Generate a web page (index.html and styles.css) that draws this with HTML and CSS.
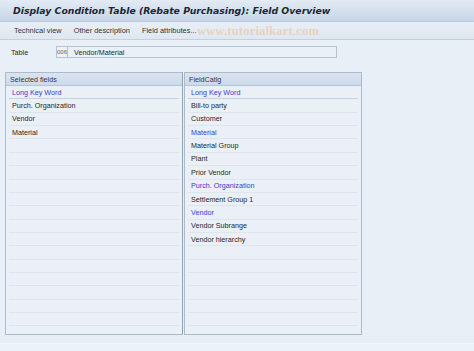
FILE: index.html
```html
<!DOCTYPE html>
<html>
<head>
<meta charset="utf-8">
<link rel="stylesheet" href="styles.css">
</head>
<body>
<div class="screen">
  <div class="titlebar">Display Condition Table (Rebate Purchasing): Field Overview</div>
  <div class="toolbar">
    <span class="tb-item">Technical view</span>
    <span class="tb-item">Other description</span>
    <span class="tb-item">Field attributes...</span>
    <span class="watermark">www.tutorialkart.com</span>
  </div>
  <div class="formrow">
    <span class="label">Table</span>
    <span class="code">006</span>
    <span class="input">Vendor/Material</span>
  </div>
  <div class="panels">
    <div class="panel left">
      <div class="phead">Selected fields</div>
      <div class="row key">Long Key Word</div>
      <div class="row">Purch. Organization</div>
      <div class="row">Vendor</div>
      <div class="row">Material</div>
      <div class="row"></div><div class="row"></div><div class="row"></div><div class="row"></div>
      <div class="row"></div><div class="row"></div><div class="row"></div><div class="row"></div>
      <div class="row"></div><div class="row"></div><div class="row"></div><div class="row"></div>
      <div class="row"></div><div class="row"></div>
    </div>
    <div class="panel right">
      <div class="phead">FieldCatlg</div>
      <div class="row key">Long Key Word</div>
      <div class="row">Bill-to party</div>
      <div class="row">Customer</div>
      <div class="row blue">Material</div>
      <div class="row">Material Group</div>
      <div class="row">Plant</div>
      <div class="row">Prior Vendor</div>
      <div class="row blue">Purch. Organization</div>
      <div class="row">Settlement Group 1</div>
      <div class="row blue">Vendor</div>
      <div class="row">Vendor Subrange</div>
      <div class="row">Vendor hierarchy</div>
      <div class="row"></div><div class="row"></div><div class="row"></div><div class="row"></div>
      <div class="row"></div><div class="row"></div>
    </div>
  </div>
  <div class="footer"></div>
</div>
</body>
</html>
```

FILE: styles.css
```css
html, body {
  margin: 0;
  padding: 0;
  background: #e9eff6;
}
.screen {
  width: 474px;
  height: 351px;
  overflow: hidden;
  font-family: "Liberation Sans", Arial, sans-serif;
  font-size: 7.2px;
  color: #262626;
  background: #e9eff6;
}
.titlebar {
  height: 22px;
  box-sizing: border-box;
  padding-left: 13px;
  display: flex;
  align-items: center;
  font-family: "DejaVu Sans", Verdana, sans-serif;
  font-weight: bold;
  font-style: italic;
  font-size: 9.3px;
  color: #1c2633;
  background: linear-gradient(#e3ebf4, #c6d6e8);
  border-bottom: 1px solid #b8cade;
}
.toolbar {
  position: relative;
  height: 18px;
  box-sizing: border-box;
  display: flex;
  align-items: center;
  gap: 12px;
  padding-left: 14px;
  background: linear-gradient(#e8eef5, #dfe7f0);
  border-bottom: 1px solid #c2d0df;
  color: #333;
  font-size: 7.4px;
}
.watermark {
  position: absolute;
  left: 197px;
  top: 2px;
  font-family: "Liberation Serif", serif;
  font-weight: bold;
  font-size: 12.5px;
  color: rgba(236, 180, 120, 0.45);
  letter-spacing: 0.2px;
}
.formrow {
  display: flex;
  align-items: center;
  height: 14px;
  margin-top: 5px;
  padding-left: 11px;
}
.label {
  width: 45px;
}
.code {
  width: 12px;
  height: 12px;
  box-sizing: border-box;
  border: 1px solid #b5c2d0;
  font-size: 6px;
  color: #666;
  display: flex;
  align-items: center;
  justify-content: center;
  background: #eef2f7;
}
.input {
  width: 269px;
  height: 12px;
  box-sizing: border-box;
  border: 1px solid #b5c2d0;
  border-left: none;
  padding-left: 6px;
  display: flex;
  align-items: center;
  background: #eaf0f7;
}
.panels {
  display: flex;
  gap: 1px;
  margin-top: 13px;
  margin-left: 5px;
  height: 263px;
}
.panel {
  height: 263px;
  box-sizing: border-box;
  border: 1px solid #a9bccf;
  background: #ebf0f7;
  overflow: hidden;
  padding: 0 3px 2px 3px;
}
.panel.left {
  width: 178px;
  border-right-color: #8fa1b5;
}
.panel.right {
  width: 178px;
}
.phead {
  height: 12px;
  margin: 0 -3px;
  padding-left: 4px;
  display: flex;
  align-items: center;
  background: linear-gradient(#dae4ef, #ccdaea);
  border-bottom: 1px solid #b2c4d7;
  color: #2d3a48;
  font-size: 7.2px;
}
.row {
  height: 13.36px;
  box-sizing: border-box;
  border-bottom: 1px solid #dde5ee;
  padding-left: 3px;
  display: flex;
  align-items: center;
}
.row.key {
  color: #3a3ad0;
  border-bottom: 1px solid #c7d2de;
}
.row.blue {
  color: #3a3ad0;
}
.footer {
  height: 8px;
  margin-top: 8px;
  border-top: 1px solid #f2f5f9;
  background: #edf2f8;
}
```
